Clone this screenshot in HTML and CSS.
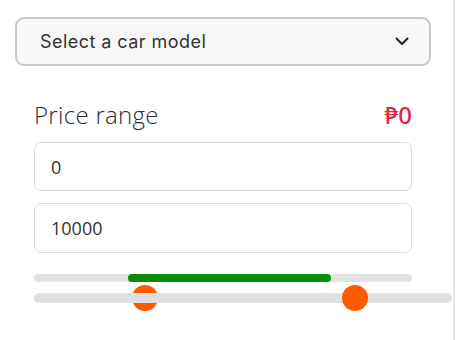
FILE: index.html
```html
<!DOCTYPE html>
<html>
<head>
<meta charset="utf-8">
<link rel="stylesheet" href="styles.css">
</head>
<body>
<div class="panel">
  <div class="select">
    <span class="select-label">Select a car model</span>
    <svg class="chev" width="14" height="9" viewBox="0 0 14 9"><path d="M1.5 1.5 L7 7 L12.5 1.5" fill="none" stroke="#222" stroke-width="2" stroke-linecap="round" stroke-linejoin="round"/></svg>
  </div>
  <div class="price">
    <div class="price-head">
      <span class="price-title">Price range</span>
      <span class="price-value">₱0</span>
    </div>
    <div class="field">0</div>
    <div class="field">10000</div>
    <div class="track1"><div class="fill" style="margin-left:94px;width:203px"></div></div>
    <div class="track2">
      <div class="thumb thumb-under" style="left:98px"></div>
      <div class="bar"></div>
      <div class="thumb thumb-over" style="left:308px"></div>
    </div>
  </div>
</div>
</body>
</html>
```
FILE: styles.css
```css
html, body { margin: 0; padding: 0; background: #fff; }
body { font-family: "Inter", "Noto Sans", sans-serif; color: #333; }
.panel {
  width: 455px;
  height: 340px;
  box-sizing: border-box;
  border-right: 2px solid #e6e6e6;
  padding: 17px 0 0 15px;
}
.select {
  width: 416px;
  height: 49px;
  box-sizing: border-box;
  border: 2px solid #c8c8c8;
  border-radius: 9px;
  background: #f7f7f7;
  display: flex;
  align-items: center;
  justify-content: space-between;
  padding: 0 20px 0 23px;
}
.select-label { font-size: 18px; letter-spacing: 0.45px; color: #333; }
.chev { display: block; }
.price { margin: 30px 0 0 19px; width: 378px; }
.price-head {
  display: flex;
  justify-content: space-between;
  align-items: center;
  height: 36px;
  margin-bottom: 10px;
}
.price-title {
  font-family: "Open Sans", sans-serif;
  font-weight: 300;
  font-size: 24px;
  letter-spacing: 0.3px;
  color: #2d2d33;
}
.price-value {
  font-family: "Noto Sans", "DejaVu Sans", sans-serif;
  font-weight: 500;
  font-size: 24px;
  color: #e2253d;
}
.field {
  height: 49px;
  box-sizing: border-box;
  border: 1px solid #dcdcdc;
  border-radius: 7px;
  display: flex;
  align-items: center;
  padding-left: 16px;
  font-family: "Open Sans", sans-serif;
  font-size: 18px;
  color: #333;
  margin-bottom: 12px;
}
.field + .field { height: 50px; margin-bottom: 0; }
.track1 {
  margin-top: 21px;
  height: 8px;
  border-radius: 4px;
  background: #e2e2e2;
  display: flex;
}
.fill { height: 8px; border-radius: 4px; background: #079007; }
.track2 { position: relative; margin-top: 11px; width: 418px; height: 10px; }
.bar { position: relative; z-index: 1; height: 10px; border-radius: 5px; background: #dfe0e2; }
.thumb {
  position: absolute;
  top: -8px;
  width: 26px;
  height: 26px;
  border-radius: 50%;
  background: #ff5a00;
}
.thumb-under { z-index: 0; }
.thumb-over { z-index: 2; }
```
